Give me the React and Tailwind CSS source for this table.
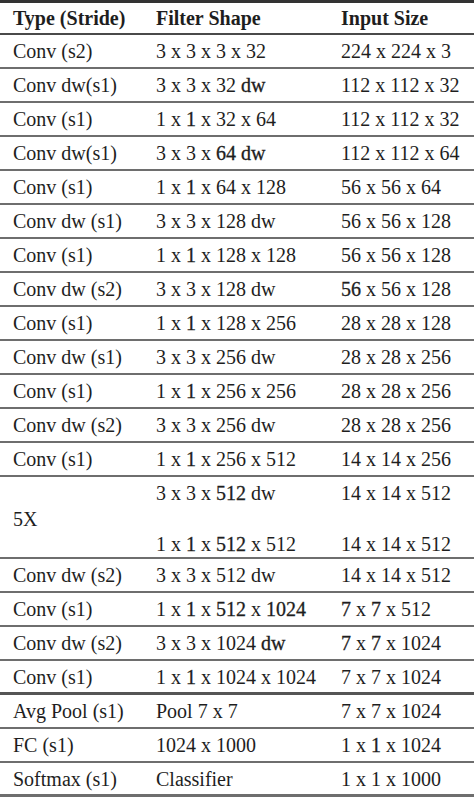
const B = ({ children }) => <span className="[-webkit-text-stroke:0.3px_#1e1e1e]">{children}</span>;

const rows = [
  ["Conv (s2)", "3 x 3 x 3 x 32", "224 x 224 x 3"],
  ["Conv dw(s1)", <>3 x 3 x 32 <B>dw</B></>, "112 x 112 x 32"],
  ["Conv (s1)", <>1 x <B>1</B> x 32 x 64</>, "112 x 112 x 32"],
  ["Conv dw(s1)", <>3 x 3 x <B>64 dw</B></>, "112 x 112 x 64"],
  ["Conv (s1)", <>1 x <B>1</B> x 64 x 128</>, "56 x 56 x 64"],
  ["Conv dw (s1)", "3 x 3 x 128 dw", "56 x 56 x 128"],
  ["Conv (s1)", <>1 x <B>1</B> x 128 x 128</>, "56 x 56 x 128"],
  ["Conv dw (s2)", "3 x 3 x 128 dw", <><B>56</B> x 56 x 128</>],
  ["Conv (s1)", <>1 x <B>1</B> x 128 x 256</>, "28 x 28 x 128"],
  ["Conv dw (s1)", "3 x 3 x 256 dw", "28 x 28 x 256"],
  ["Conv (s1)", <>1 x <B>1</B> x 256 x 256</>, "28 x 28 x 256"],
  ["Conv dw (s2)", "3 x 3 x 256 dw", "28 x 28 x 256"],
  ["Conv (s1)", <>1 x <B>1</B> x 256 x 512</>, "14 x 14 x 256"],
];

const tail = [
  ["Conv dw (s2)", "3 x 3 x 512 dw", "14 x 14 x 512"],
  ["Conv (s1)", <>1 x <B>1</B> x <B>512</B> x <B>1024</B></>, <><B>7</B> x <B>7</B> x 512</>],
  ["Conv dw (s2)", <>3 x 3 x 1024 <B>dw</B></>, <><B>7</B> x <B>7</B> x 1024</>],
  ["Conv (s1)", <>1 x <B>1</B> x 1024 x 1024</>, "7 x 7 x 1024"],
];

const last = [
  ["Avg Pool (s1)", "Pool 7 x 7", "7 x 7 x 1024"],
  ["FC (s1)", "1024 x 1000", <>1 x <B>1</B> x 1024</>],
  ["Softmax (s1)", "Classifier", "1 x 1 x 1000"],
];

function Row({ cells, className = "" }) {
  return (
    <div className={`grid grid-cols-[143px_185px_1fr] items-center h-[34px] pl-[13px] border-b-2 border-[#6e6e6e] ${className}`}>
      {cells.map((c, i) => (
        <div key={i} className="whitespace-nowrap">{c}</div>
      ))}
    </div>
  );
}

export default function App() {
  return (
    <div
      className="w-[474px] h-[799px] bg-white text-[#1e1e1e] text-[20px] leading-none overflow-hidden"
      style={{ fontFamily: '"Liberation Serif", serif' }}
    >
      <div className="border-t-[3px] border-[#333]">
        <div className="grid grid-cols-[143px_185px_1fr] items-center h-[32px] pl-[13px] border-b-2 border-[#4a4a4a] font-semibold">
          <div>Type (Stride)</div>
          <div>Filter Shape</div>
          <div>Input Size</div>
        </div>
        {rows.map((r, i) => (
          <Row key={i} cells={r} />
        ))}
        <div className="grid grid-cols-[143px_185px_1fr] items-center h-[82px] pl-[13px] border-b-2 border-[#6e6e6e]">
          <div className="pt-[3px]">5X</div>
          <div className="flex flex-col gap-[31px] pt-[3px] whitespace-nowrap">
            <div>3 x 3 x <B>512</B> dw</div>
            <div>1 x <B>1</B> x <B>512</B> x 512</div>
          </div>
          <div className="flex flex-col gap-[31px] pt-[3px] whitespace-nowrap">
            <div>14 x 14 x 512</div>
            <div>14 x 14 x 512</div>
          </div>
        </div>
        {tail.map((r, i) => (
          <Row key={i} cells={r} className={i === 3 ? "border-b-[3px] border-[#555]" : ""} />
        ))}
        {last.map((r, i) => (
          <Row key={i} cells={r} className={i === 2 ? "border-b-[3px] border-[#2e2e2e]" : ""} />
        ))}
      </div>
    </div>
  );
}
